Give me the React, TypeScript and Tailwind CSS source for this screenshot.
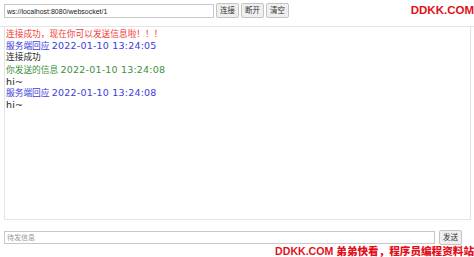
import React from "react";

const cjk = "font-['Liberation_Sans','Noto_Sans_CJK_SC',sans-serif]";

type Msg = {
  kind: "sys" | "srv" | "me" | "text";
  label?: string;
  time?: string;
  text?: string;
  latin?: boolean;
};

const messages: Msg[] = [
  { kind: "sys", text: "连接成功，现在你可以发送信息啦！！！" },
  { kind: "srv", label: "服务端回应", time: "2022-01-10 13:24:05" },
  { kind: "text", text: "连接成功" },
  { kind: "me", label: "你发送的信息", time: "2022-01-10 13:24:08" },
  { kind: "text", text: "hi~", latin: true },
  { kind: "srv", label: "服务端回应", time: "2022-01-10 13:24:08" },
  { kind: "text", text: "hi~", latin: true },
];

// latin bits in the log are wider than the CJK glyphs
const lat = "font-['DejaVu_Sans',sans-serif] text-[9.5px] tracking-[0.2px]";

function Line({ m }: { m: Msg }) {
  if (m.kind === "sys") return <div className="text-[#f23c3c]">{m.text}</div>;
  if (m.kind === "text")
    return <div className={`text-[#222] ${m.latin ? lat : ""}`}>{m.text}</div>;
  const color = m.kind === "srv" ? "text-[#3b3bdc]" : "text-[#3c913c]";
  return (
    <div className={color}>
      {m.label} <span className={lat}>{m.time}</span>
    </div>
  );
}

function Btn({ children }: { children: React.ReactNode }) {
  return (
    <button className="h-[15px] px-[3px] text-[7.5px] leading-none text-[#333] bg-[#efefef] border border-[#c4c4c4] rounded-[2px]">
      {children}
    </button>
  );
}

export default function App() {
  return (
    <div className={`w-[474px] h-[257px] bg-white flex flex-col overflow-hidden leading-none ${cjk}`}>
      <div className="shrink-0 flex items-start pl-[4px] pt-[3px] h-[23px]">
        <input
          readOnly
          value="ws://localhost:8080/websocket/1"
          className="w-[210px] h-[14px] mt-[1px] px-[2px] text-[7px] text-[#222] border border-[#c8c8c8] outline-none"
        />
        <div className="flex gap-[2px] ml-[2px]">
          <Btn>连接</Btn>
          <Btn>断开</Btn>
          <Btn>清空</Btn>
        </div>
        <span className="ml-auto mt-[1px] text-[11.5px] leading-[13px] font-bold text-[#e3101b]">DDKK.COM</span>
      </div>
      <div className="shrink-0 border-t border-[#e4e4e4] mt-[3px]" />
      <div className="shrink-0 ml-[4px] mr-[3px] h-[193px] border-l border-b border-r border-[#e4e4e4] pl-[1px] pt-[2px] text-[8.7px] leading-[11.2px]">
        {messages.map((m, i) => (
          <Line key={i} m={m} />
        ))}
      </div>
      <div className="shrink-0 flex items-center pl-[4px] mt-[10px] h-[15px]">
        <input
          readOnly
          placeholder="待发信息"
          className="w-[431px] h-[13px] px-[2px] text-[7px] border border-[#c8c8c8] outline-none placeholder:text-[#999]"
        />
        <div className="ml-[4px] flex">
          <Btn>发送</Btn>
        </div>
      </div>
      <div className="shrink-0 flex justify-end">
        <span className="text-[10.6px] leading-[13px] font-black text-[#e3101b]">
          DDKK.COM 弟弟快看，程序员编程资料站
        </span>
      </div>
    </div>
  );
}
